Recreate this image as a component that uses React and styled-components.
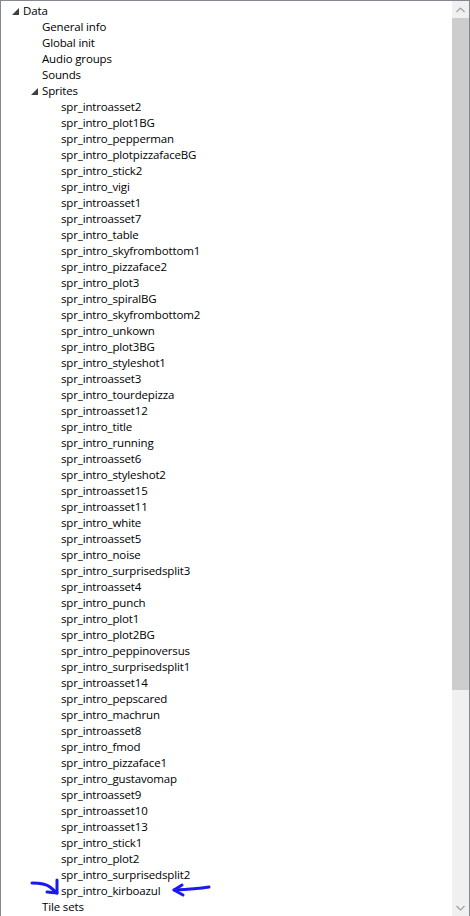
import styled, { createGlobalStyle } from "styled-components";

const GlobalStyle = createGlobalStyle`
  html, body {
    margin: 0;
    padding: 0;
    background: #ffffff;
    overflow: hidden;
  }
`;

const Frame = styled.div`
  position: relative;
  width: 470px;
  height: 916px;
  box-sizing: border-box;
  border-top: 1px solid #828790;
  border-left: 1px solid #828790;
  border-right: 1px solid #828790;
  display: flex;
  background: #ffffff;
  overflow: hidden;
`;

const Tree = styled.div`
  flex: 1;
  padding-top: 2px;
  font-family: "Open Sans", "Noto Sans", sans-serif;
  font-size: 11.5px;
  letter-spacing: -0.15px;
  color: #000000;
`;

const Row = styled.div`
  height: 16px;
  line-height: 16px;
  display: flex;
  align-items: center;
  padding-left: ${(p) => 22 + p.$level * 19}px;
  white-space: nowrap;
`;

const Toggle = styled.span`
  width: 11px;
  margin-left: -11px;
  display: flex;
  align-items: center;
  justify-content: flex-start;
`;

const Label = styled.span`
  padding-left: 0;
`;

const Scrollbar = styled.div`
  width: 17px;
  background: #f0f0f0;
  display: flex;
  flex-direction: column;
`;

const ScrollButton = styled.div`
  height: 17px;
  display: flex;
  align-items: center;
  justify-content: center;
`;

const Thumb = styled.div`
  height: 672px;
  background: #cdcdcd;
`;

const Track = styled.div`
  flex: 1;
`;

const Marks = styled.svg`
  position: absolute;
  left: 0;
  top: 0;
  pointer-events: none;
`;

const sprites = [
  "spr_introasset2",
  "spr_intro_plot1BG",
  "spr_intro_pepperman",
  "spr_intro_plotpizzafaceBG",
  "spr_intro_stick2",
  "spr_intro_vigi",
  "spr_introasset1",
  "spr_introasset7",
  "spr_intro_table",
  "spr_intro_skyfrombottom1",
  "spr_intro_pizzaface2",
  "spr_intro_plot3",
  "spr_intro_spiralBG",
  "spr_intro_skyfrombottom2",
  "spr_intro_unkown",
  "spr_intro_plot3BG",
  "spr_intro_styleshot1",
  "spr_introasset3",
  "spr_intro_tourdepizza",
  "spr_introasset12",
  "spr_intro_title",
  "spr_intro_running",
  "spr_introasset6",
  "spr_intro_styleshot2",
  "spr_introasset15",
  "spr_introasset11",
  "spr_intro_white",
  "spr_introasset5",
  "spr_intro_noise",
  "spr_intro_surprisedsplit3",
  "spr_introasset4",
  "spr_intro_punch",
  "spr_intro_plot1",
  "spr_intro_plot2BG",
  "spr_intro_peppinoversus",
  "spr_intro_surprisedsplit1",
  "spr_introasset14",
  "spr_intro_pepscared",
  "spr_intro_machrun",
  "spr_introasset8",
  "spr_intro_fmod",
  "spr_intro_pizzaface1",
  "spr_intro_gustavomap",
  "spr_introasset9",
  "spr_introasset10",
  "spr_introasset13",
  "spr_intro_stick1",
  "spr_intro_plot2",
  "spr_intro_surprisedsplit2",
  "spr_intro_kirboazul",
];

const Expanded = () => (
  <svg width="7" height="7" viewBox="0 0 7 7">
    <path d="M0 7 L7 7 L7 0 Z" fill="#404040" />
  </svg>
);

const Item = ({ level, open, children }) => (
  <Row $level={level}>
    {open && (
      <Toggle>
        <Expanded />
      </Toggle>
    )}
    <Label>{children}</Label>
  </Row>
);

const App = () => {
  return (
    <>
      <GlobalStyle />
      <Frame>
        <Tree>
          <Item level={0} open>
            Data
          </Item>
          <Item level={1}>General info</Item>
          <Item level={1}>Global init</Item>
          <Item level={1}>Audio groups</Item>
          <Item level={1}>Sounds</Item>
          <Item level={1} open>
            Sprites
          </Item>
          {sprites.map((s) => (
            <Item key={s} level={2}>
              {s}
            </Item>
          ))}
          <Item level={1}>Tile sets</Item>
        </Tree>
        <Scrollbar>
          <ScrollButton>
            <svg width="9" height="6" viewBox="0 0 9 6">
              <path d="M0.5 5 L4.5 1 L8.5 5" fill="none" stroke="#a0a0a0" strokeWidth="1.2" />
            </svg>
          </ScrollButton>
          <Thumb />
          <Track />
          <ScrollButton>
            <svg width="9" height="6" viewBox="0 0 9 6">
              <path d="M0.5 1 L4.5 5 L8.5 1" fill="none" stroke="#a0a0a0" strokeWidth="1.2" />
            </svg>
          </ScrollButton>
        </Scrollbar>
        <Marks width="470" height="916" viewBox="0 0 470 916">
          <g fill="none" stroke="#1a1aee" strokeWidth="3" strokeLinecap="round" strokeLinejoin="round">
            <path d="M31 882 Q44 882 49 886 L56 892" />
            <path d="M56 879 L56 892 L46 891" />
            <path d="M208 886 Q195 888 173 889" />
            <path d="M181 884 L173 889 L182 894" />
          </g>
        </Marks>
      </Frame>
    </>
  );
};

export default App;
